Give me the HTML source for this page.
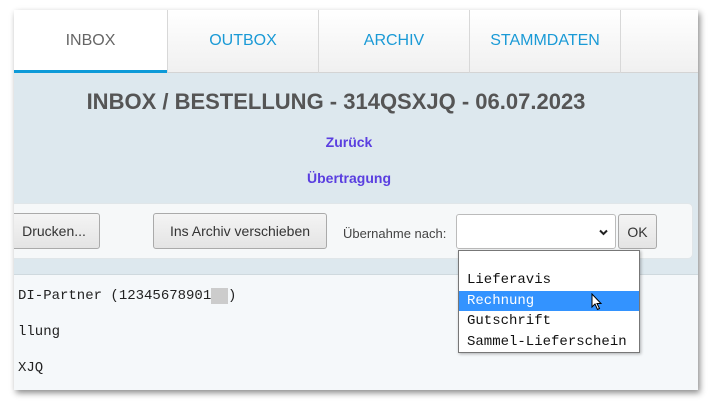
<!DOCTYPE html>
<html><head><style>
*{margin:0;padding:0;box-sizing:border-box}
body{width:721px;height:409px;background:#fff;position:relative;overflow:hidden;font-family:"Liberation Sans",sans-serif}
.page{position:absolute;left:14px;top:10px;width:684px;height:380px;overflow:hidden;background:#f5f8fa;box-shadow:2px 3px 6px rgba(0,0,0,.45)}
.tabs{position:absolute;left:0;top:0;width:684px;height:63px;background:linear-gradient(#fff,#f0f0f0);border-bottom:1px solid #d4d4d4}
.tab{position:absolute;top:0;height:63px;line-height:62px;text-align:center;font-size:16px;color:#1a9ad6;border-right:1px solid #d8d8d8}
.hdr{position:absolute;left:0;top:63px;width:684px;height:202px;background:#dde8ee;border-bottom:1px solid #cfd9de}
.t{position:absolute;width:100%;text-align:center;font-weight:bold}
.bar{position:absolute;left:-4px;top:193px;width:683px;height:56px;background:#f6f8f9;border-radius:5px;border:1px solid #e0e6e9}
.btn{position:absolute;height:36px;border:1px solid #aaa;border-radius:3px;background:linear-gradient(#f4f4f4,#e4e4e4);font-size:14px;line-height:34px;text-align:center;color:#333}
.mono{position:absolute;font-family:"Liberation Mono",monospace;font-size:14px;color:#222}
.dd{position:absolute;left:458px;top:250px;width:182px;height:103px;background:#fff;border:1px solid #777;box-shadow:1px 1px 3px rgba(0,0,0,.3);font-family:"Liberation Mono",monospace;font-size:14px;color:#111}
.dd div{height:20.5px;line-height:20px;padding-left:8px}
</style></head><body>
<div class="page">
 <div class="tabs">
  <div class="tab" style="left:0;width:154px;background:#fff;color:#666">INBOX</div>
  <div class="tab" style="left:154px;width:151px">OUTBOX</div>
  <div class="tab" style="left:305px;width:151px">ARCHIV</div>
  <div class="tab" style="left:456px;width:151px">STAMMDATEN</div>
  <div style="position:absolute;left:0;top:60px;width:153px;height:4px;background:#0d9ad8"></div>
 </div>
 <div class="hdr">
  <div class="t" style="top:16px;font-size:22px;color:#555;left:-20px">INBOX / BESTELLUNG - 314QSXJQ - 06.07.2023</div>
  <div class="t" style="top:61px;font-size:14px;color:#5a3ee0;left:-7px">Zurück</div>
  <div class="t" style="top:97px;font-size:14px;color:#5a3ee0;left:-7px">Übertragung</div>
 </div>
 <div class="bar" style="top:193px"></div>
 <div class="btn" style="left:-6px;top:203px;width:92px">Drucken...</div>
 <div class="btn" style="left:139px;top:203px;width:174px">Ins Archiv verschieben</div>
 <div style="position:absolute;left:329px;top:216px;font-size:13px;color:#444">Übernahme nach:</div>
 <div style="position:absolute;left:442px;top:204px;width:160px;height:35px;background:#fff;border:1px solid #bbb;border-radius:3px"><svg style="position:absolute;right:7px;top:14px" width="9" height="7" viewBox="0 0 9 7"><path d="M1 1.5 L4.5 5 L8 1.5" fill="none" stroke="#222" stroke-width="2"/></svg></div>
 <div class="btn" style="left:604px;top:204px;width:39px;height:35px">OK</div>
 <div class="mono" style="left:4px;top:278px">DI-Partner (12345678901<span style="background:#ccc;color:#ccc">XX</span>)</div>
 <div class="mono" style="left:4px;top:314px">llung</div>
 <div class="mono" style="left:4px;top:350px">XJQ</div>
</div>
<div class="dd">
 <div style="height:19px"></div>
 <div>Lieferavis</div>
 <div style="background:#3393ff;color:#fff">Rechnung</div>
 <div>Gutschrift</div>
 <div>Sammel-Lieferschein</div>
</div>
<svg style="position:absolute;left:591px;top:293px" width="12" height="18" viewBox="0 0 12 18"><path d="M1 1 L1 14 L4 11 L6.5 16.5 L8.5 15.5 L6 10.5 L10 10.5 Z" fill="#fff" stroke="#000" stroke-width="1"/></svg>
</body></html>
